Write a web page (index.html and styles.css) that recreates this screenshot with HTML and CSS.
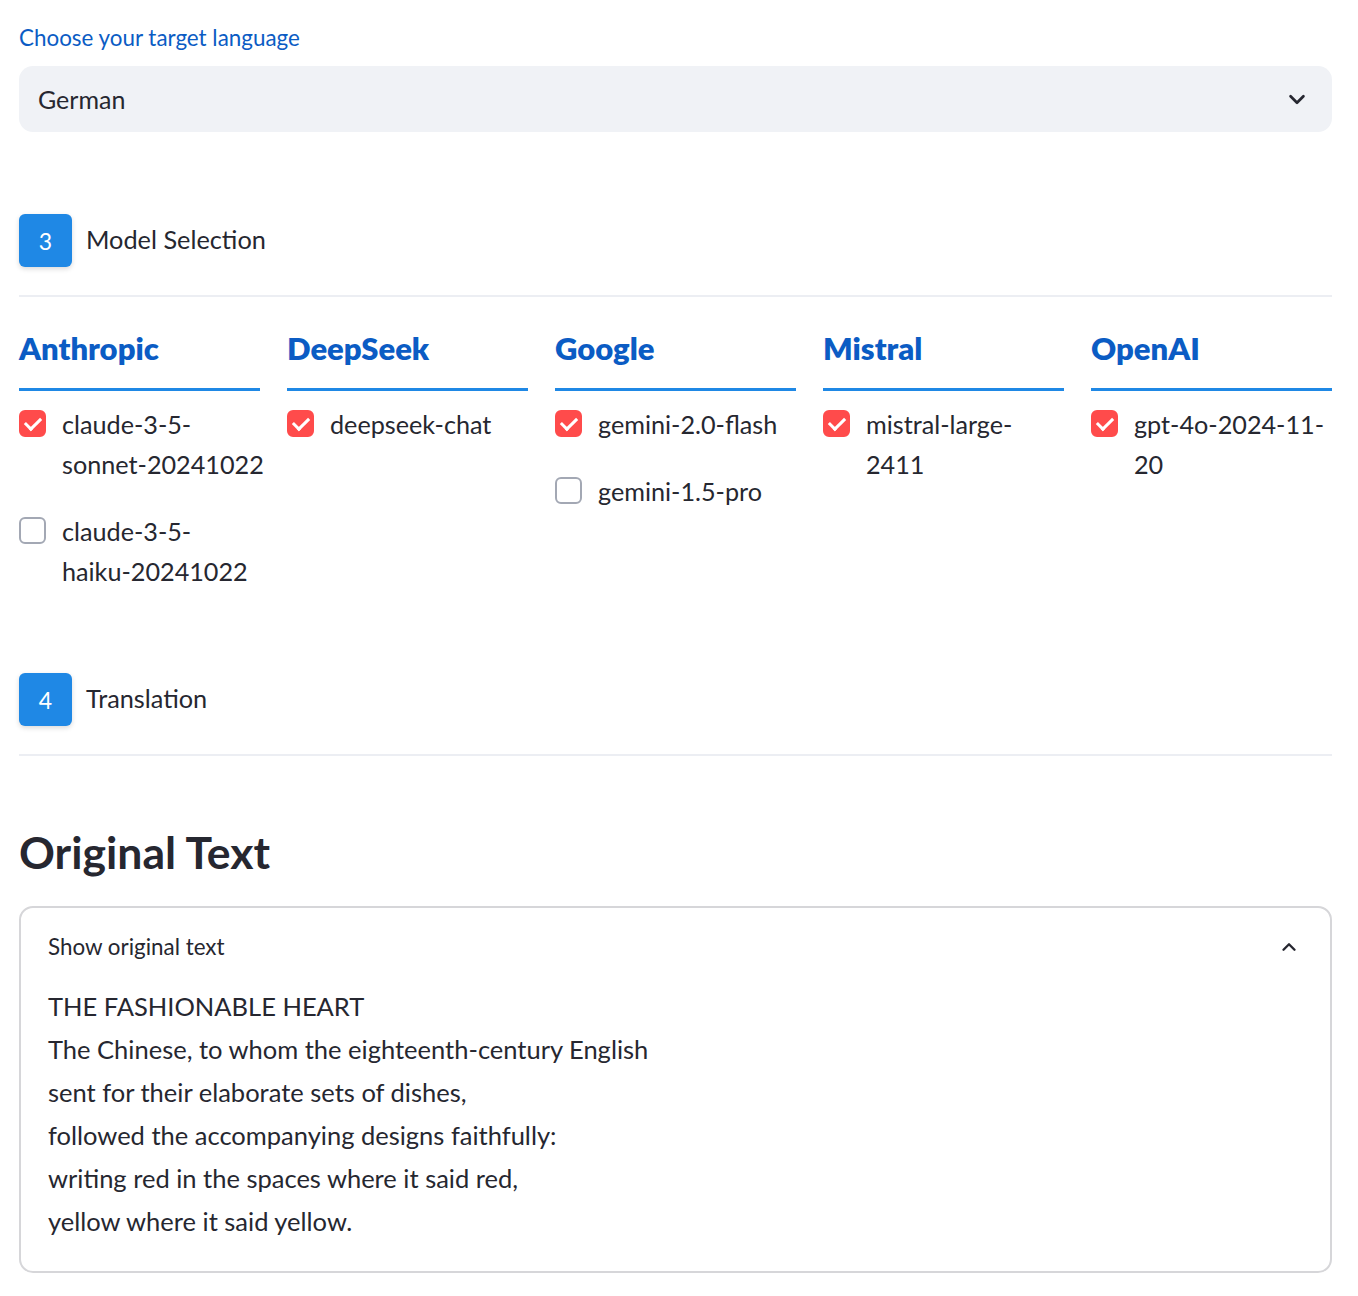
FILE: index.html
```html
<!DOCTYPE html>
<html lang="en">
<head>
    <meta charset="UTF-8">
    <title>Translation Comparison</title>
    <link rel="stylesheet" href="styles.css">
</head>
<body>
<div class="pagina">

    <label class="rotulo">Choose your target language</label>
    <div class="seletor">
        <span>German</span>
        <svg class="seta" width="22" height="22" viewBox="0 0 24 24"><path d="M5 9l7 7 7-7" fill="none" stroke="#262730" stroke-width="3" stroke-linecap="round" stroke-linejoin="round"/></svg>
    </div>

    <div class="passo">
        <div class="numero">3</div>
        <div class="titulo-passo">Model Selection</div>
    </div>
    <hr class="divisor">

    <div class="colunas">
        <div class="coluna">
            <h3>Anthropic</h3>
            <div class="item"><span class="caixa marcada"></span><span class="nome">claude-3-5-<br>sonnet-20241022</span></div>
            <div class="item"><span class="caixa"></span><span class="nome">claude-3-5-<br>haiku-20241022</span></div>
        </div>
        <div class="coluna">
            <h3>DeepSeek</h3>
            <div class="item"><span class="caixa marcada"></span><span class="nome">deepseek-chat</span></div>
        </div>
        <div class="coluna">
            <h3>Google</h3>
            <div class="item"><span class="caixa marcada"></span><span class="nome">gemini-2.0-flash</span></div>
            <div class="item"><span class="caixa"></span><span class="nome">gemini-1.5-pro</span></div>
        </div>
        <div class="coluna">
            <h3>Mistral</h3>
            <div class="item"><span class="caixa marcada"></span><span class="nome">mistral-large-<br>2411</span></div>
        </div>
        <div class="coluna">
            <h3>OpenAI</h3>
            <div class="item"><span class="caixa marcada"></span><span class="nome">gpt-4o-2024-11-<br>20</span></div>
        </div>
    </div>

    <div class="passo passo-traducao">
        <div class="numero">4</div>
        <div class="titulo-passo">Translation</div>
    </div>
    <hr class="divisor">

    <h2 class="original">Original Text</h2>

    <div class="expansor">
        <div class="cabecalho-expansor">
            <span>Show original text</span>
            <svg width="22" height="22" viewBox="0 0 24 24"><path d="M6 15l6-6 6 6" fill="none" stroke="#262730" stroke-width="2.6" stroke-linecap="round" stroke-linejoin="round"/></svg>
        </div>
        <div class="poema">
            <p>THE FASHIONABLE HEART</p>
            <p>The Chinese, to whom the eighteenth-century English</p>
            <p>sent for their elaborate sets of dishes,</p>
            <p>followed the accompanying designs faithfully:</p>
            <p>writing red in the spaces where it said red,</p>
            <p>yellow where it said yellow.</p>
        </div>
    </div>

</div>
</body>
</html>
```

FILE: styles.css
```css
* {
    margin: 0;
    padding: 0;
    box-sizing: border-box;
}

body {
    font-family: Lato, "Noto Sans", sans-serif;
    color: #262730;
    background: #fff;
}

.pagina {
    padding: 22px 26px 24px 19px;
}

.rotulo {
    display: block;
    font-size: 22.4px;
    color: #0b5cc4;
    line-height: 32px;
    margin-bottom: 12px;
}

.seletor {
    height: 66px;
    background: #f0f2f6;
    border-radius: 14px;
    display: flex;
    align-items: center;
    justify-content: space-between;
    padding: 0 24px 0 19px;
    font-size: 25px;
}

.passo {
    display: flex;
    align-items: center;
    gap: 14px;
    margin-top: 82px;
}

.numero {
    width: 53px;
    height: 53px;
    background: #1f88e5;
    color: #fff;
    border-radius: 6px;
    display: flex;
    align-items: center;
    justify-content: center;
    font-size: 23px;
    box-shadow: 0 2px 5px rgba(0, 0, 0, 0.15);
}

.titulo-passo {
    font-size: 25.3px;
    padding-bottom: 3px;
}

.divisor {
    border: none;
    height: 2px;
    background: #eceef3;
    margin-top: 28px;
}

.colunas {
    display: grid;
    grid-template-columns: repeat(5, minmax(0, 1fr));
    gap: 27px;
    margin-top: 27px;
}

.coluna h3 {
    font-size: 31px;
    font-weight: 800;
    color: #0b5cc4;
    line-height: 48px;
    padding-bottom: 16px;
    border-bottom: 3px solid #1f88e5;
    margin-bottom: 13px;
}

.item {
    display: flex;
    gap: 16px;
    font-size: 25.2px;
    line-height: 40px;
    margin-bottom: 27px;
}

.nome {
    white-space: nowrap;
}

.caixa {
    flex: none;
    width: 27px;
    height: 27px;
    margin-top: 6px;
    border: 2px solid #a3a8b4;
    border-radius: 6px;
    position: relative;
}

.caixa.marcada {
    background: #ff4b4b;
    border-color: #ff4b4b;
}

.caixa.marcada::after {
    content: "";
    position: absolute;
    left: 7px;
    top: 2px;
    width: 7px;
    height: 13px;
    border: solid #fff;
    border-width: 0 3px 3px 0;
    transform: rotate(45deg);
}

.passo-traducao {
    margin-top: 55px;
}

.original {
    font-size: 44.5px;
    font-weight: 700;
    line-height: 60px;
    margin-top: 66px;
}

.expansor {
    margin-top: 24px;
    border: 2px solid #d6d6d9;
    border-radius: 14px;
    padding: 22px 30px 28px 27px;
}

.cabecalho-expansor {
    display: flex;
    align-items: center;
    justify-content: space-between;
    font-size: 22.4px;
    line-height: 34px;
}

.poema {
    margin-top: 21px;
    font-size: 25.5px;
    line-height: 43px;
}
```
